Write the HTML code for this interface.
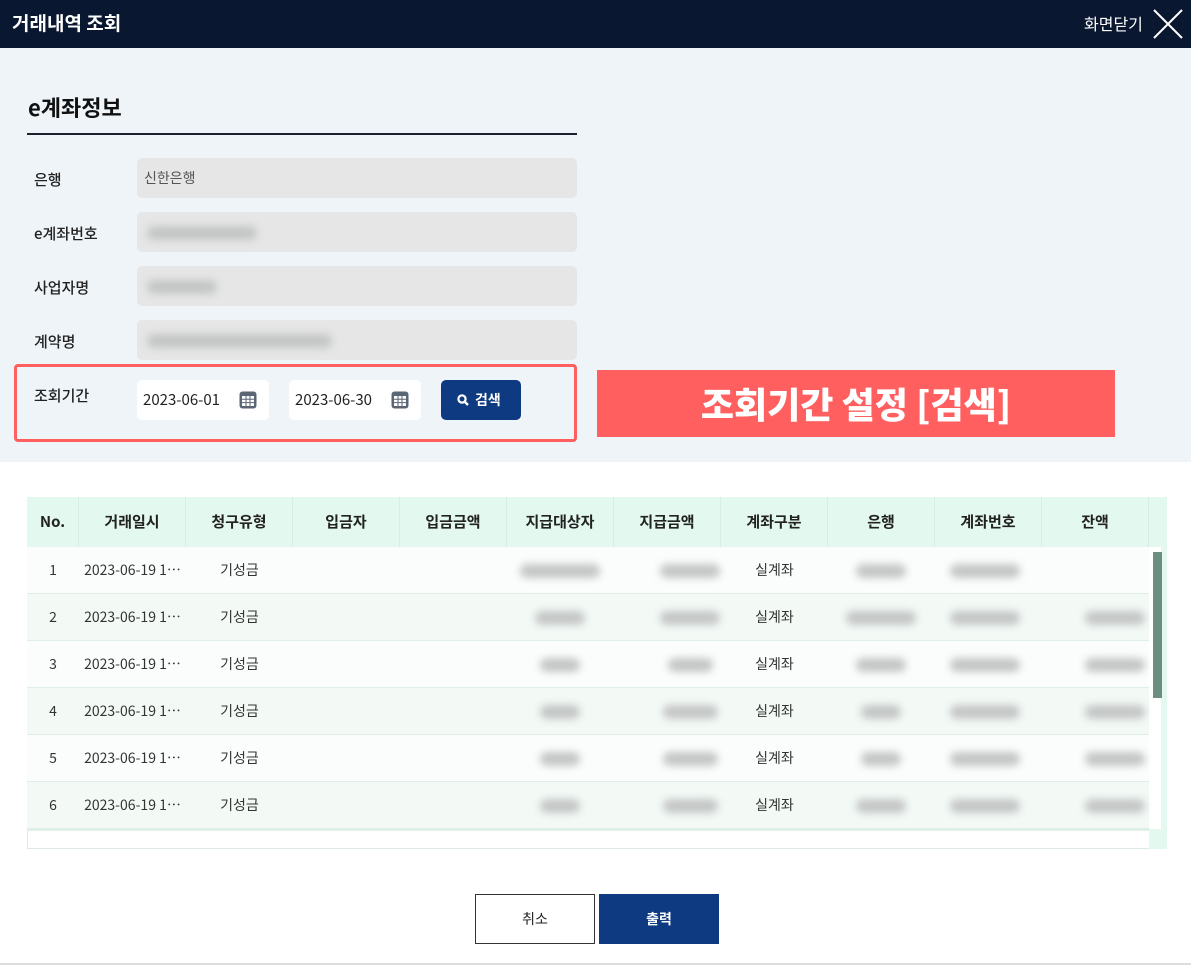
<!DOCTYPE html>
<html><head><meta charset="utf-8"><style>
*{margin:0;padding:0;box-sizing:border-box}
body{width:1191px;height:965px;position:relative;background:#fff;font-family:"Noto Sans CJK KR","Liberation Sans",sans-serif;overflow:hidden;color:#222}
.abs{position:absolute}
.hdr{left:0;top:0;width:1191px;height:48px;background:#0a1730;color:#fff}
.top{left:0;top:48px;width:1191px;height:414px;background:#eff4f8}
.lbl{left:34px;font-size:15px;color:#222;font-weight:500;line-height:20px}
.inp{left:137px;width:440px;height:40px;background:#e6e6e6;border-radius:5px}
.blur{position:absolute;height:14px;background:#c4c6c6;border-radius:7px;filter:blur(4px)}
.date{width:132px;height:40px;background:#fff;border-radius:5px;font-size:15px;padding:0 0 0 6px;line-height:40px}
.cal{position:absolute;right:12px;top:11px}
.th{top:497px;height:50px;background:#e3f8ef;font-size:15px;text-align:center;line-height:50px;font-weight:bold;color:#222;border-right:1px solid #d6eee3}
.cell{font-size:14px;text-align:center;line-height:47px;color:#333}
</style></head><body>
<div class="abs hdr"><div class="abs" style="left:12px;top:9px;font-size:19px;font-weight:bold;line-height:28px">거래내역 조회</div>
<div class="abs" style="left:1084px;top:11px;font-size:16px;line-height:24px">화면닫기</div>
<svg class="abs" style="left:1152px;top:8px" width="32" height="32"><path d="M2 2L30 30M30 2L2 30" stroke="#fff" stroke-width="2"/></svg></div>
<div class="abs top"></div>
<div class="abs" style="left:28px;top:92px;font-size:22px;font-weight:bold;color:#111;line-height:30px">e계좌정보</div>
<div class="abs" style="left:27px;top:133px;width:550px;height:2px;background:#1a2030"></div>
<div class="abs lbl" style="top:170px">은행</div><div class="abs inp" style="top:158px"><span class="abs" style="left:7px;top:10px;font-size:14px;color:#555;line-height:20px">신한은행</span></div>
<div class="abs lbl" style="top:224px">e계좌번호</div><div class="abs inp" style="top:212px"><div class="blur" style="left:10px;top:14px;width:110px"></div></div>
<div class="abs lbl" style="top:278px">사업자명</div><div class="abs inp" style="top:266px"><div class="blur" style="left:10px;top:14px;width:70px"></div></div>
<div class="abs lbl" style="top:332px">계약명</div><div class="abs inp" style="top:320px"><div class="blur" style="left:10px;top:14px;width:185px"></div></div>
<div class="abs" style="left:14px;top:364px;width:563px;height:78px;border:3px solid #ff5f5f;border-radius:4px"></div>
<div class="abs lbl" style="top:386px">조회기간</div>
<div class="abs date" style="left:137px;top:380px">2023-06-01<svg class="cal" width="18" height="18"><rect x="0.5" y="0.5" width="17" height="17" rx="3" fill="#5b6675"/><rect x="3" y="5" width="12" height="10" fill="#fff"/><path d="M3 8.3H15M3 11.6H15M7 5V15M11 5V15" stroke="#5b6675" stroke-width="1"/></svg></div>
<div class="abs date" style="left:289px;top:380px">2023-06-30<svg class="cal" width="18" height="18"><rect x="0.5" y="0.5" width="17" height="17" rx="3" fill="#5b6675"/><rect x="3" y="5" width="12" height="10" fill="#fff"/><path d="M3 8.3H15M3 11.6H15M7 5V15M11 5V15" stroke="#5b6675" stroke-width="1"/></svg></div>
<div class="abs" style="left:441px;top:380px;width:80px;height:40px;background:#0d3a80;border-radius:5px;color:#fff;font-size:14px;font-weight:bold;line-height:40px;padding-left:16px">
<svg width="12" height="12" style="vertical-align:-1px;margin-right:6px"><circle cx="5" cy="5" r="3.6" stroke="#fff" stroke-width="2.2" fill="none"/><path d="M7.5 7.5L11 11" stroke="#fff" stroke-width="2.4"/></svg>검색</div>
<div class="abs" style="left:597px;top:370px;width:518px;height:67px;background:#ff5f5f;color:#fff;font-size:36px;font-weight:900;text-align:center;line-height:67px">조회기간 설정 [검색]</div>

<div class="abs" style="left:27px;top:497px;width:1140px;height:352px;border:1px solid #e0e8e4;border-top:2px solid #b8c0bc;background:#fff"></div>
<div class="abs" style="left:1149px;top:497px;width:18px;height:352px;background:#e3f8ef"></div>
<div class="abs" style="left:1149px;top:547px;width:12px;height:282px;background:#fff"></div>
<div class="abs" style="left:27px;top:829px;width:1122px;height:2px;background:#dfeee6"></div>
<div id="t"></div>
<div class="abs" style="left:1153px;top:552px;width:9px;height:146px;background:#6a8f7e"></div>

<div class="abs" style="left:475px;top:894px;width:120px;height:50px;border:1px solid #333;background:#fff;text-align:center;line-height:48px;font-size:14px">취소</div>
<div class="abs" style="left:599px;top:894px;width:120px;height:50px;background:#0d3a80;color:#fff;text-align:center;line-height:50px;font-size:14px;font-weight:bold">출력</div>
<div class="abs" style="left:0;top:963px;width:1191px;height:2px;background:#ddd"></div>
<script>
var cols=[27,79,186,293,400,507,614,721,828,935,1042,1149];
var h=["No.","거래일시","청구유형","입금자","입금금액","지급대상자","지급금액","계좌구분","은행","계좌번호","잔액"];
var s="";
for(var i=0;i<11;i++)s+='<div class="abs th" style="left:'+cols[i]+'px;width:'+(cols[i+1]-cols[i])+'px">'+h[i]+'</div>';
var w=[[80,60,50,70,0],[50,60,70,70,60],[40,45,50,70,60],[40,55,40,70,60],[40,55,40,70,60],[40,55,50,70,60]];
for(var r=0;r<6;r++){var y=547+r*47,bg=r%2?'#f3faf6':'#fbfdfc';
s+='<div class="abs" style="left:27px;top:'+y+'px;width:1122px;height:47px;background:'+bg+';border-bottom:1px solid #dfeee6"></div>';
s+='<div class="abs cell" style="left:27px;top:'+y+'px;width:52px">'+(r+1)+'</div>';
s+='<div class="abs cell" style="left:79px;top:'+y+'px;width:107px">2023-06-19 1…</div>';
s+='<div class="abs cell" style="left:186px;top:'+y+'px;width:107px">기성금</div>';
s+='<div class="abs cell" style="left:721px;top:'+y+'px;width:107px">실계좌</div>';
var c=[[560,w[r][0]],[690,w[r][1]],[881,w[r][2]],[985,70],[1115,w[r][4]]];
for(var k=0;k<5;k++)if(c[k][1])s+='<div class="blur" style="left:'+(c[k][0]-c[k][1]/2)+'px;top:'+(y+17)+'px;width:'+c[k][1]+'px"></div>';}
document.getElementById('t').innerHTML=s;
</script>
</body></html>
